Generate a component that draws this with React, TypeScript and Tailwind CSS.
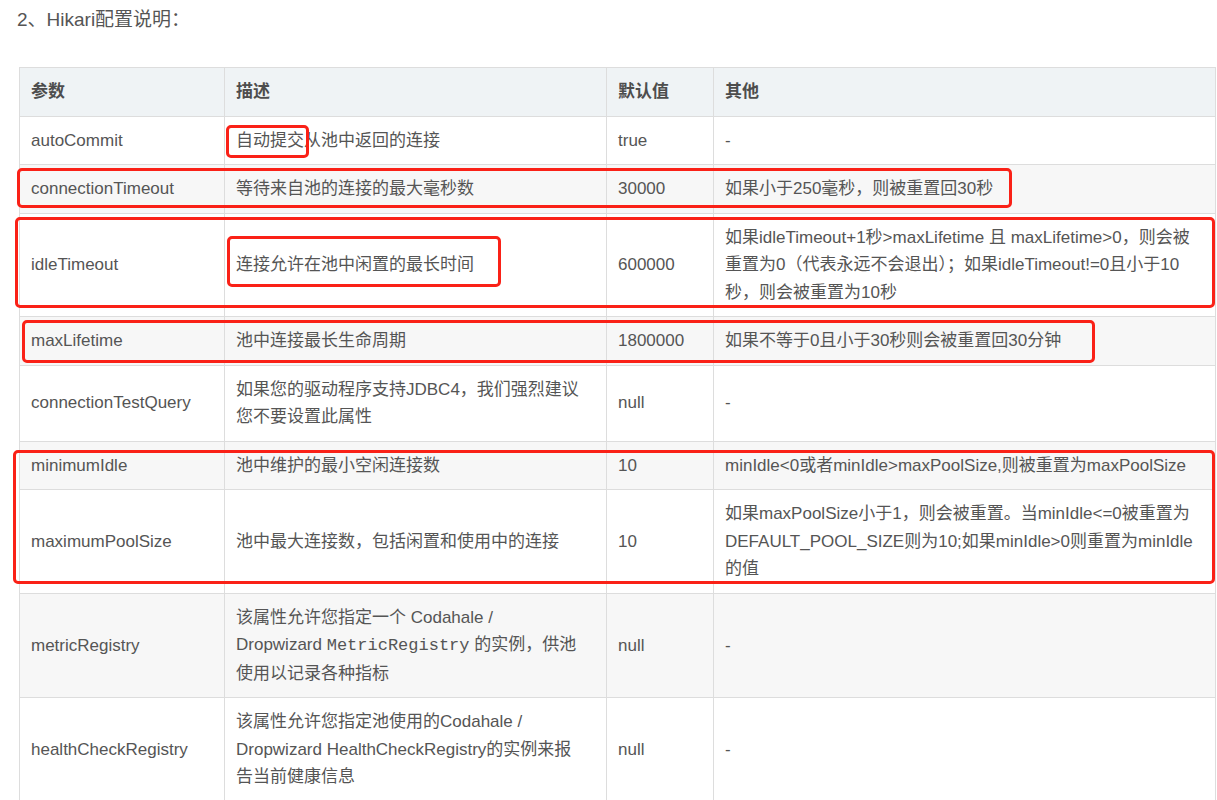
import React from 'react';

type Row = {
  name: string;
  desc: React.ReactNode;
  def: string;
  other: React.ReactNode;
};

const rows: Row[] = [
  { name: 'autoCommit', desc: '自动提交从池中返回的连接', def: 'true', other: '-' },
  { name: 'connectionTimeout', desc: '等待来自池的连接的最大毫秒数', def: '30000', other: '如果小于250毫秒，则被重置回30秒' },
  {
    name: 'idleTimeout',
    desc: '连接允许在池中闲置的最长时间',
    def: '600000',
    other: (
      <>
        如果idleTimeout+1秒&gt;maxLifetime 且 maxLifetime&gt;0，则会被
        <br />
        重置为0（代表永远不会退出）；如果idleTimeout!=0且小于10
        <br />
        秒，则会被重置为10秒
      </>
    ),
  },
  { name: 'maxLifetime', desc: '池中连接最长生命周期', def: '1800000', other: '如果不等于0且小于30秒则会被重置回30分钟' },
  {
    name: 'connectionTestQuery',
    desc: (
      <>
        如果您的驱动程序支持JDBC4，我们强烈建议
        <br />
        您不要设置此属性
      </>
    ),
    def: 'null',
    other: '-',
  },
  { name: 'minimumIdle', desc: '池中维护的最小空闲连接数', def: '10', other: 'minIdle<0或者minIdle>maxPoolSize,则被重置为maxPoolSize' },
  {
    name: 'maximumPoolSize',
    desc: '池中最大连接数，包括闲置和使用中的连接',
    def: '10',
    other: (
      <>
        如果maxPoolSize小于1，则会被重置。当minIdle&lt;=0被重置为
        <br />
        DEFAULT_POOL_SIZE则为10;如果minIdle&gt;0则重置为minIdle
        <br />
        的值
      </>
    ),
  },
  {
    name: 'metricRegistry',
    desc: (
      <>
        该属性允许您指定一个 Codahale /
        <br />
        Dropwizard <code className="font-['Liberation_Mono',monospace] text-[17px]">MetricRegistry</code> 的实例，供池
        <br />
        使用以记录各种指标
      </>
    ),
    def: 'null',
    other: '-',
  },
  {
    name: 'healthCheckRegistry',
    desc: (
      <>
        该属性允许您指定池使用的Codahale /
        <br />
        Dropwizard HealthCheckRegistry的实例来报
        <br />
        告当前健康信息
      </>
    ),
    def: 'null',
    other: '-',
  },
];

const Mark = ({ className }: { className: string }) => (
  <div className={`pointer-events-none absolute rounded-[5px] border-[3px] border-[#fa2117] ${className}`} />
);

export default function App() {
  const cell = 'border border-[#dddddd] px-[11px] py-[10px] align-middle whitespace-nowrap';
  return (
    <div className="relative min-h-screen bg-white font-['Liberation_Sans','Noto_Sans_CJK_SC',sans-serif] text-[17px] leading-[27.5px] text-[#555555]">
      <div className="pl-[17px] pt-[6px] text-[19px] leading-[28px]">2、Hikari配置说明：</div>

      <div className="pl-[19px] pt-[33px]">
        <table className="w-[1196px] table-fixed border-collapse">
          <colgroup>
            <col className="w-[205px]" />
            <col className="w-[382px]" />
            <col className="w-[107px]" />
            <col className="w-[502px]" />
          </colgroup>
          <thead>
            <tr className="bg-[#eff3f5] text-left">
              <th className={`${cell} font-bold text-[#4d4d4d]`}>参数</th>
              <th className={`${cell} font-bold text-[#4d4d4d]`}>描述</th>
              <th className={`${cell} font-bold text-[#4d4d4d]`}>默认值</th>
              <th className={`${cell} font-bold text-[#4d4d4d]`}>其他</th>
            </tr>
          </thead>
          <tbody>
            {rows.map((r, i) => (
              <tr key={r.name} className={i % 2 === 1 ? 'bg-[#f7f7f7]' : 'bg-white'}>
                <td className={cell}>{r.name}</td>
                <td className={cell}>{r.desc}</td>
                <td className={cell}>{r.def}</td>
                <td className={cell}>{r.other}</td>
              </tr>
            ))}
          </tbody>
        </table>
      </div>

      {/* annotations drawn over the table */}
      <Mark className="left-[226px] top-[125px] h-[33px] w-[83px]" />
      <Mark className="left-[17px] top-[168px] h-[40px] w-[995px]" />
      <Mark className="left-[15px] top-[217px] h-[91px] w-[1200px]" />
      <Mark className="left-[227px] top-[236px] h-[51px] w-[274px]" />
      <Mark className="left-[22px] top-[320px] h-[43px] w-[1073px]" />
      <Mark className="left-[13px] top-[450px] h-[134px] w-[1202px]" />
    </div>
  );
}
